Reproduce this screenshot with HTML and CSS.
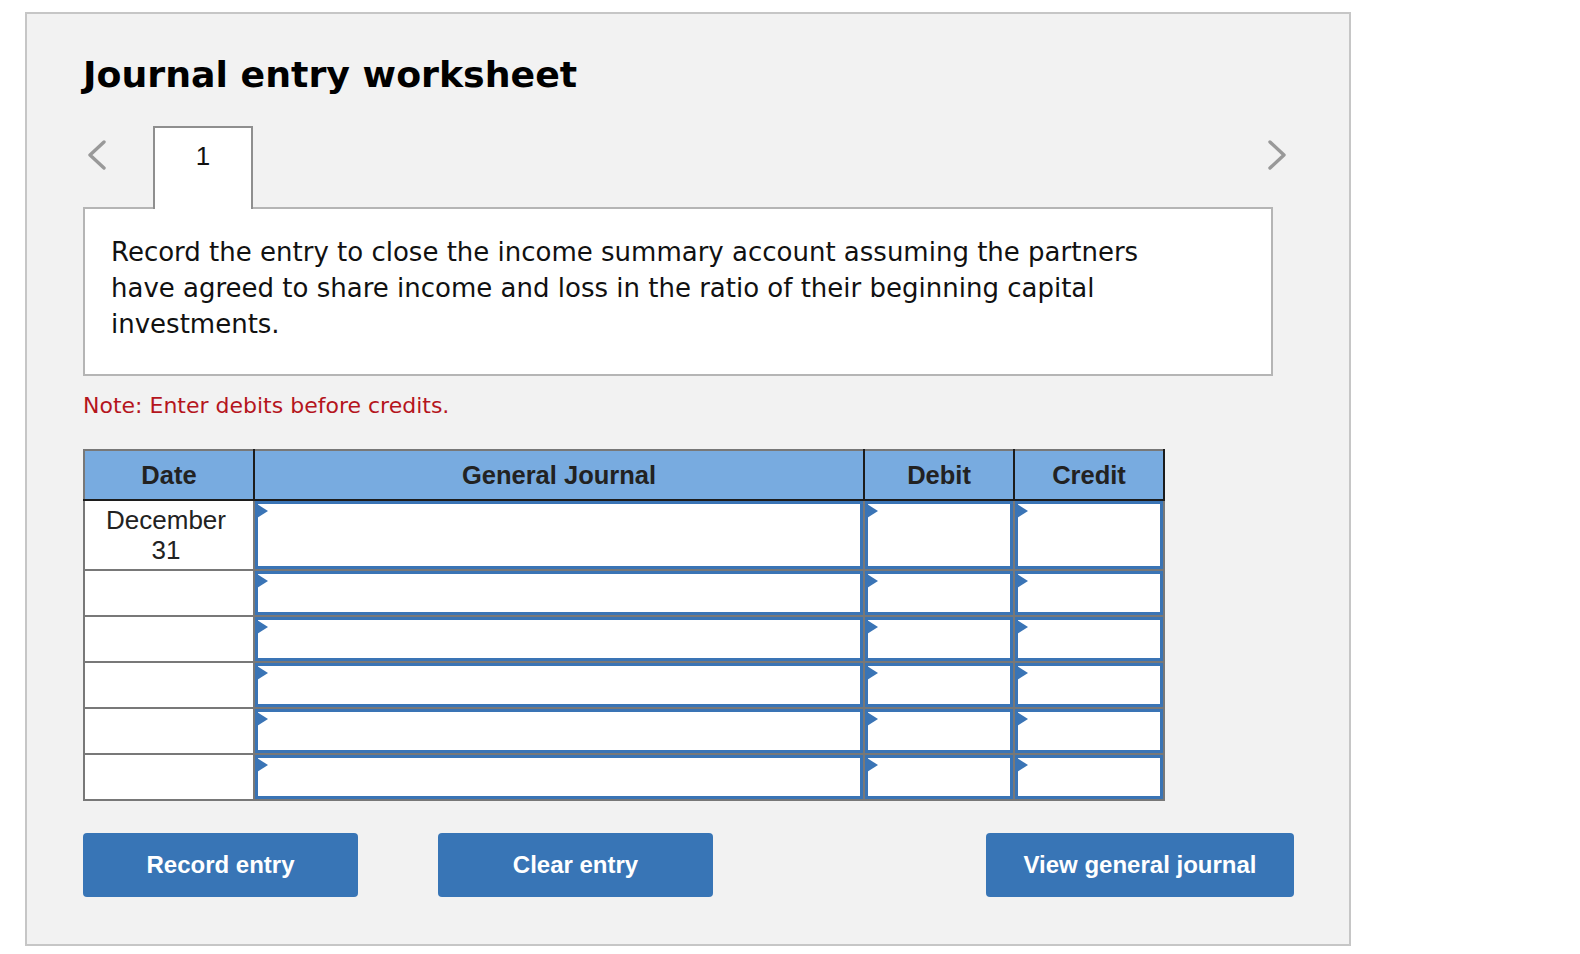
FILE: index.html
```html
<!DOCTYPE html>
<html lang="en">
<head>
  <meta charset="UTF-8">
  <title>Journal entry worksheet</title>
  <link rel="stylesheet" href="styles.css">
</head>
<body>

  <div class="worksheet">
    <h1>Journal entry worksheet</h1>

    <div class="tabs">
      <span class="nav prev">
        <svg width="20" height="30" viewBox="0 0 20 30"><polyline points="17,2 3,15 17,28" /></svg>
      </span>
      <div class="tab">1</div>
      <span class="nav next">
        <svg width="20" height="30" viewBox="0 0 20 30"><polyline points="3,2 17,15 3,28" /></svg>
      </span>
    </div>

    <div class="question">
      <p>Record the entry to close the income summary account assuming the partners have agreed to share income and loss in the ratio of their beginning capital investments.</p>
    </div>

    <p class="note">Note: Enter debits before credits.</p>

    <table class="journal">
      <colgroup>
        <col class="col-date">
        <col class="col-account">
        <col class="col-amount">
        <col class="col-amount">
      </colgroup>
      <tr class="head">
        <th>Date</th>
        <th>General Journal</th>
        <th>Debit</th>
        <th>Credit</th>
      </tr>
      <tr class="first">
        <td class="date">December<br>31</td>
        <td><div class="field"></div></td>
        <td><div class="field"></div></td>
        <td><div class="field"></div></td>
      </tr>
      <tr>
        <td class="date"></td>
        <td><div class="field"></div></td>
        <td><div class="field"></div></td>
        <td><div class="field"></div></td>
      </tr>
      <tr>
        <td class="date"></td>
        <td><div class="field"></div></td>
        <td><div class="field"></div></td>
        <td><div class="field"></div></td>
      </tr>
      <tr>
        <td class="date"></td>
        <td><div class="field"></div></td>
        <td><div class="field"></div></td>
        <td><div class="field"></div></td>
      </tr>
      <tr>
        <td class="date"></td>
        <td><div class="field"></div></td>
        <td><div class="field"></div></td>
        <td><div class="field"></div></td>
      </tr>
      <tr>
        <td class="date"></td>
        <td><div class="field"></div></td>
        <td><div class="field"></div></td>
        <td><div class="field"></div></td>
      </tr>
    </table>

    <div class="buttons">
      <button class="btn">Record entry</button>
      <button class="btn clear">Clear entry</button>
      <button class="btn view">View general journal</button>
    </div>
  </div>

</body>
</html>
```

FILE: styles.css
```css
body {
  margin: 0;
  background: white;
  font-family: "DejaVu Sans", Verdana, sans-serif;
  color: #111;
}

.worksheet {
  box-sizing: border-box;
  width: 1326px;
  margin: 12px 0 0 25px;
  padding: 40px 0 47px 56px;
  background: #f2f2f2;
  border: 2px solid #c6c6c6;
}

h1 {
  margin: 0;
  font-size: 36.3px;
  line-height: 42px;
  font-weight: bold;
  color: #000;
}

/* tab strip */

.tabs {
  display: flex;
  align-items: flex-end;
  width: 1204px;
  height: 81px;
  margin-top: 30px;
}

.nav {
  align-self: flex-start;
  margin-top: 14px;
  line-height: 0;
}

.nav polyline {
  fill: none;
  stroke: #999;
  stroke-width: 3.4;
  stroke-linecap: round;
  stroke-linejoin: round;
}

.prev {
  margin-left: 4px;
}

.next {
  margin-left: auto;
}

.tab {
  box-sizing: border-box;
  width: 100px;
  height: 83px;
  margin-left: 46px;
  margin-bottom: -2px;
  padding-top: 13px;
  position: relative;
  z-index: 1;
  background: white;
  border: 2px solid #8f8f8f;
  border-bottom: none;
  text-align: center;
  font-family: "Liberation Sans", Arial, sans-serif;
  font-size: 26px;
  line-height: 30px;
  color: #111;
}

.question {
  box-sizing: border-box;
  width: 1190px;
  height: 169px;
  padding: 25px 26px 0;
  background: white;
  border: 2px solid #b5b5b5;
}

.question p {
  max-width: 1050px;
  margin: 0;
  font-size: 26px;
  line-height: 36px;
}

.note {
  margin: 17px 0 0;
  font-size: 22px;
  line-height: 26px;
  color: #b5151d;
}

/* journal table */

.journal {
  margin-top: 30px;
  border-collapse: collapse;
  table-layout: fixed;
  width: 1080px;
  font-family: "Liberation Sans", Arial, sans-serif;
  color: #222;
}

.col-date {
  width: 170px;
}

.col-account {
  width: 610px;
}

.col-amount {
  width: 150px;
}

.journal th {
  height: 48px;
  padding: 0;
  background: #78abe0;
  border: 2px solid #787878;
  border-right-color: #1c1c1c;
  border-bottom-color: #1c1c1c;
  font-size: 25.5px;
  font-weight: bold;
}

.journal td {
  padding: 0;
  background: white;
  border: 2px solid #787878;
  vertical-align: top;
}

.journal td.date {
  padding-right: 6px;
  font-size: 26px;
  line-height: 30px;
  text-align: center;
  vertical-align: middle;
}

.field {
  box-sizing: border-box;
  height: 44px;
  position: relative;
  background: white;
  border: 3px solid #3a74b5;
}

.first .field {
  height: 68px;
}

.field::before {
  content: "";
  position: absolute;
  left: -1px;
  top: 0;
  border-left: 11px solid #3a74b5;
  border-top: 7px solid transparent;
  border-bottom: 7px solid transparent;
}

/* buttons */

.buttons {
  display: flex;
  width: 1211px;
  margin-top: 32px;
}

.btn {
  width: 275px;
  height: 64px;
  padding: 0;
  background: #3875b6;
  color: white;
  border: none;
  border-radius: 4px;
  font-family: "Liberation Sans", Arial, sans-serif;
  font-size: 24px;
  font-weight: bold;
}

.clear {
  margin-left: 80px;
}

.view {
  width: 308px;
  margin-left: auto;
}
```
